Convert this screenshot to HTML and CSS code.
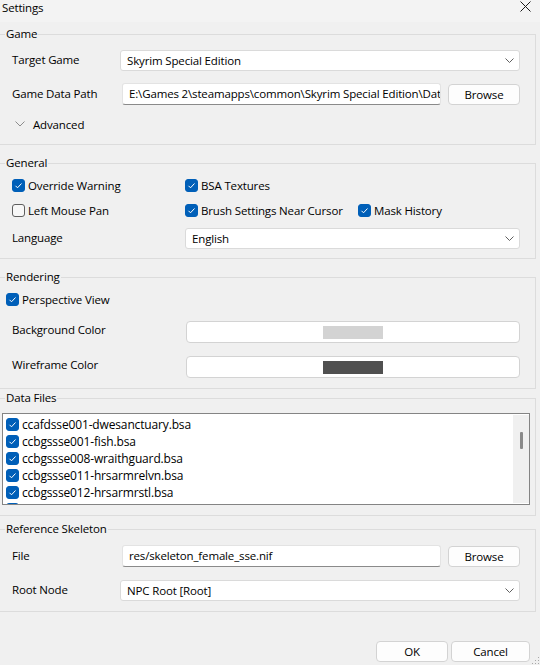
FILE: index.html
```html
<!DOCTYPE html>
<html>
  <head>
    <title>Settings</title>
    <link rel="stylesheet" href="styles.css">
  </head>
  <body>
    <div class="window">
      <div class="titlebar">
        <span class="title">Settings</span>
        <svg class="close" width="11" height="11" viewBox="0 0 11 11">
          <path d="M0.5 0.5L10.5 10.5M10.5 0.5L0.5 10.5" stroke="#1a1a1a" stroke-width="1" fill="none"/>
        </svg>
      </div>

      <fieldset class="group group-game">
        <legend>Game</legend>
        <div class="group-body">
          <div class="form-row">
            <span class="label">Target Game</span>
            <div class="combo">
              <span>Skyrim Special Edition</span>
              <svg class="chevron" width="9" height="5" viewBox="0 0 9 5"><path d="M0.5 0.5L4.5 4.5L8.5 0.5" stroke="#5f5f5f" fill="none"/></svg>
            </div>
          </div>
          <div class="form-row row-path">
            <span class="label">Game Data Path</span>
            <div class="path-field">
              <div class="text-input">E:\Games 2\steamapps\common\Skyrim Special Edition\Data</div>
              <button class="btn">Browse</button>
            </div>
          </div>
          <div class="advanced">
            <svg width="10" height="6" viewBox="0 0 10 6"><path d="M0.5 0.5L5 5L9.5 0.5" stroke="#8c8c8c" fill="none"/></svg>
            <span>Advanced</span>
          </div>
        </div>
      </fieldset>

      <fieldset class="group group-general">
        <legend>General</legend>
        <div class="group-body">
          <div class="check-grid">
            <label class="check-item"><span class="check on"><svg width="13" height="13" viewBox="0 0 13 13"><path d="M3.5 6.8L5.5 8.8L9.5 4.5" stroke="#fff" fill="none"/></svg></span>Override Warning</label>
            <label class="check-item"><span class="check on"><svg width="13" height="13" viewBox="0 0 13 13"><path d="M3.5 6.8L5.5 8.8L9.5 4.5" stroke="#fff" fill="none"/></svg></span>BSA Textures</label>
            <span></span>
            <label class="check-item"><span class="check"></span>Left Mouse Pan</label>
            <label class="check-item"><span class="check on"><svg width="13" height="13" viewBox="0 0 13 13"><path d="M3.5 6.8L5.5 8.8L9.5 4.5" stroke="#fff" fill="none"/></svg></span>Brush Settings Near Cursor</label>
            <label class="check-item"><span class="check on"><svg width="13" height="13" viewBox="0 0 13 13"><path d="M3.5 6.8L5.5 8.8L9.5 4.5" stroke="#fff" fill="none"/></svg></span>Mask History</label>
          </div>
          <div class="form-row row-language">
            <span class="label">Language</span>
            <div class="combo">
              <span>English</span>
              <svg class="chevron" width="9" height="5" viewBox="0 0 9 5"><path d="M0.5 0.5L4.5 4.5L8.5 0.5" stroke="#5f5f5f" fill="none"/></svg>
            </div>
          </div>
        </div>
      </fieldset>

      <fieldset class="group group-rendering">
        <legend>Rendering</legend>
        <div class="group-body">
          <label class="check-item perspective"><span class="check on"><svg width="13" height="13" viewBox="0 0 13 13"><path d="M3.5 6.8L5.5 8.8L9.5 4.5" stroke="#fff" fill="none"/></svg></span>Perspective View</label>
          <div class="form-row color-row">
            <span class="label">Background Color</span>
            <div class="color-btn"><span class="swatch" style="background: #d3d3d3"></span></div>
          </div>
          <div class="form-row color-row wire-row">
            <span class="label">Wireframe Color</span>
            <div class="color-btn"><span class="swatch" style="background: #505050"></span></div>
          </div>
        </div>
      </fieldset>

      <fieldset class="group group-data">
        <legend>Data Files</legend>
        <div class="group-body">
          <div class="file-list">
            <div class="file-items" id="fileItems"></div>
            <div class="scrollbar"><div class="thumb"></div></div>
          </div>
        </div>
      </fieldset>

      <fieldset class="group group-skeleton">
        <legend>Reference Skeleton</legend>
        <div class="group-body">
          <div class="form-row row-file">
            <span class="label">File</span>
            <div class="path-field">
              <div class="text-input">res/skeleton_female_sse.nif</div>
              <button class="btn">Browse</button>
            </div>
          </div>
          <div class="form-row row-root">
            <span class="label">Root Node</span>
            <div class="combo">
              <span>NPC Root [Root]</span>
              <svg class="chevron" width="9" height="5" viewBox="0 0 9 5"><path d="M0.5 0.5L4.5 4.5L8.5 0.5" stroke="#5f5f5f" fill="none"/></svg>
            </div>
          </div>
        </div>
      </fieldset>

      <div class="footer">
        <button class="btn btn-ok">OK</button>
        <button class="btn btn-cancel">Cancel</button>
      </div>

      <svg class="grip" width="10" height="10" viewBox="0 0 10 10">
        <rect x="8" y="2" width="1" height="1" fill="#a8a8a8"/>
        <rect x="8" y="5" width="1" height="1" fill="#a8a8a8"/>
        <rect x="5" y="5" width="1" height="1" fill="#a8a8a8"/>
        <rect x="8" y="8" width="1" height="1" fill="#a8a8a8"/>
        <rect x="5" y="8" width="1" height="1" fill="#a8a8a8"/>
        <rect x="2" y="8" width="1" height="1" fill="#a8a8a8"/>
      </svg>
    </div>

    <script>
      // Data files shown in the list
      const dataFiles = [
        "ccafdsse001-dwesanctuary.bsa",
        "ccbgssse001-fish.bsa",
        "ccbgssse008-wraithguard.bsa",
        "ccbgssse011-hrsarmrelvn.bsa",
        "ccbgssse012-hrsarmrstl.bsa",
        "ccbgssse016-umbra.bsa",
      ];

      const container = document.getElementById("fileItems");
      dataFiles.forEach((name) => {
        const row = document.createElement("div");
        row.className = "file-row";
        row.innerHTML = `
          <span class="check on"><svg width="13" height="13" viewBox="0 0 13 13"><path d="M3.5 6.8L5.5 8.8L9.5 4.5" stroke="#fff" fill="none"/></svg></span>
          <span>${name}</span>
        `;
        container.appendChild(row);
      });
    </script>
  </body>
</html>
```

FILE: styles.css
```css
body {
  margin: 0;
  background-color: #f0f0f0;
  font-family: "Open Sans", "Noto Sans", sans-serif;
  font-size: 11.5px;
  letter-spacing: -0.15px;
  color: #000;
  overflow: hidden;
}

.window {
  position: relative;
  width: 540px;
  height: 665px;
}

.titlebar {
  height: 22px;
  box-sizing: border-box;
  background: #f3f3f3;
  display: flex;
  justify-content: space-between;
  align-items: flex-start;
  padding: 0 9px 0 2px;
}

.title {
  line-height: 15px;
}

.close {
  margin-top: 1px;
}

/* group boxes */
.group {
  margin: 0 4px 0 -1px;
  padding: 0;
  border: 1px solid #dcdcdc;
  min-width: 0;
}

.group legend {
  margin-left: 5px;
  padding: 0 1px;
  line-height: 16px;
}

.group-body {
  padding: 0 15px 0 12px;
}

.group-game {
  margin-top: 4px;
}
.group-game .group-body {
  padding-top: 8px;
  padding-bottom: 10px;
}

.group-general {
  margin-top: 10px;
}
.group-general .group-body {
  padding-top: 4px;
  padding-bottom: 9px;
}

.group-rendering {
  margin-top: 10px;
}
.group-rendering .group-body {
  padding-top: 4px;
  padding-bottom: 10px;
}

.group-data {
  margin-top: 1px;
}
.group-data .group-body {
  padding: 7px 5px 10px 2px;
}

.group-skeleton {
  margin-top: 5px;
}
.group-skeleton .group-body {
  padding-top: 8px;
  padding-bottom: 10px;
}

/* rows */
.form-row {
  display: grid;
  grid-template-columns: 108px minmax(0, 1fr);
  align-items: center;
}

.label {
  margin-top: -2px;
}

.row-path {
  margin-top: 12px;
}

.row-language {
  grid-template-columns: 173px minmax(0, 1fr);
  margin-top: 8px;
}

.row-root {
  margin-top: 13px;
}

.combo {
  height: 21px;
  box-sizing: border-box;
  background: #fff;
  border: 1px solid #dadada;
  border-radius: 3px;
  display: flex;
  align-items: center;
  justify-content: space-between;
  padding: 0 5px 0 6px;
}

.path-field {
  display: flex;
  align-items: center;
  gap: 7px;
  min-width: 0;
}

.text-input {
  flex: 1;
  min-width: 0;
  height: 22px;
  box-sizing: border-box;
  margin-left: 2px;
  background: #fff;
  border: 1px solid #e3e3e3;
  border-bottom-color: #8a8a8a;
  border-radius: 3px;
  padding: 0 6px;
  line-height: 20px;
  white-space: nowrap;
  overflow: hidden;
}

.btn {
  font: inherit;
  letter-spacing: inherit;
  color: #000;
  background: #fdfdfd;
  border: 1px solid #d3d3d3;
  border-radius: 4px;
  height: 21px;
  width: 72px;
  flex-shrink: 0;
  padding: 0;
  box-sizing: border-box;
}

.advanced {
  margin-top: 9px;
  height: 20px;
  display: flex;
  align-items: center;
  gap: 8px;
  padding-left: 3px;
}

/* checkboxes */
.check-grid {
  display: grid;
  grid-template-columns: 173px 173px auto;
  row-gap: 5px;
}

.check-item {
  height: 20px;
  display: flex;
  align-items: center;
  gap: 3px;
  white-space: nowrap;
}

.check {
  width: 13px;
  height: 13px;
  box-sizing: border-box;
  border-radius: 3px;
  border: 1px solid #5e5e5e;
  background: #f7f7f7;
  flex-shrink: 0;
}

.check svg {
  display: block;
  margin: -1px;
}

.check.on {
  background: #005fb8;
  border-color: #005fb8;
}

.perspective {
  margin-left: -6px;
}

.color-row {
  grid-template-columns: 174px minmax(0, 1fr);
  margin-top: 12px;
}

.color-row .label {
  margin-top: 0;
  margin-bottom: 5px;
}

.wire-row {
  margin-top: 13px;
}

.color-btn {
  height: 22px;
  box-sizing: border-box;
  background: #fff;
  border: 1px solid #d3d3d3;
  border-radius: 4px;
  display: flex;
  align-items: center;
  justify-content: center;
}

.swatch {
  width: 60px;
  height: 13px;
}

/* data files list */
.file-list {
  height: 92px;
  box-sizing: border-box;
  border: 1px solid #848484;
  background: #fff;
  display: flex;
  overflow: hidden;
}

.file-items {
  flex: 1;
  padding: 2px 0 0 3px;
}

.file-row {
  height: 17px;
  display: flex;
  align-items: center;
  gap: 3px;
  white-space: nowrap;
  font-size: 12px;
}

.scrollbar {
  width: 16px;
  background: #f0f0f0;
  margin: 1px 0;
  position: relative;
}

.thumb {
  position: absolute;
  left: 7px;
  top: 17px;
  width: 3px;
  height: 17px;
  border-radius: 1px;
  background: #8a8a8a;
}

/* footer */
.footer {
  margin-top: 29px;
  display: flex;
  justify-content: flex-end;
  gap: 3px;
  padding-right: 10px;
}

.btn-cancel {
  width: 79px;
}

.grip {
  position: absolute;
  right: 0;
  bottom: 0;
}
```
